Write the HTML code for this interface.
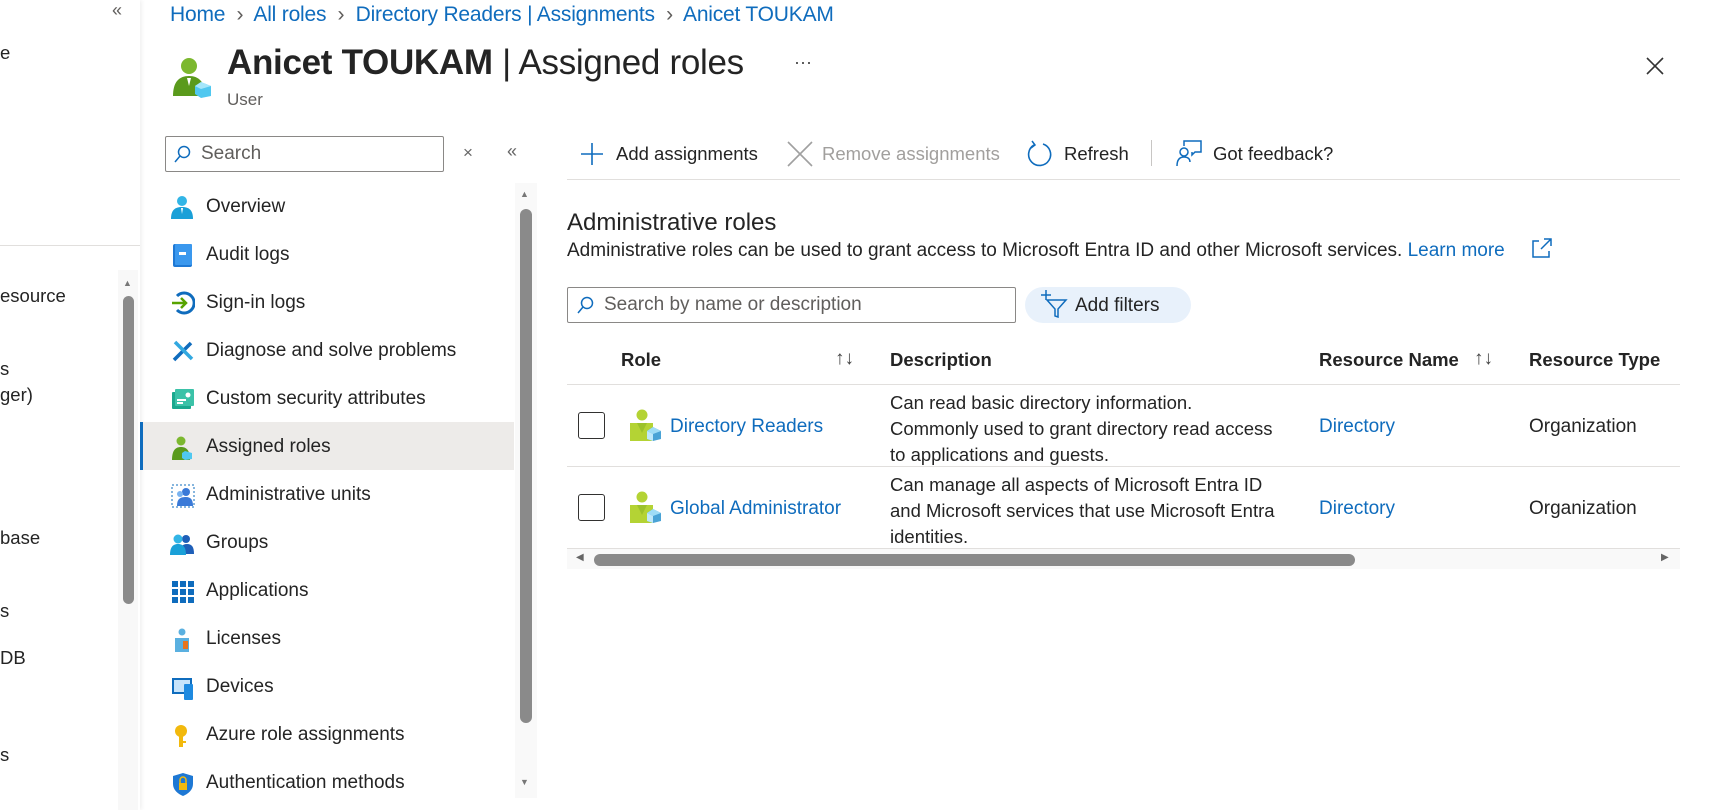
<!DOCTYPE html>
<html><head><meta charset="utf-8"><style>
*{margin:0;padding:0;box-sizing:border-box}
body{width:1710px;height:810px;overflow:hidden;background:#fff;font-family:"Liberation Sans",sans-serif;color:#242424;position:relative}
.a{position:absolute;white-space:nowrap}
.lk{color:#0f6cbd}
.nav{font-size:19px;line-height:20px}
.ico{position:absolute;width:24px;height:24px}
</style></head><body>
<!-- left partial panel -->
<div class="a" style="left:0;top:0;width:140px;height:810px;background:#fff;box-shadow:2px 0 4px rgba(0,0,0,.06)"></div>
<div class="a" style="left:112px;top:0;font-size:18px;color:#605e5c">«</div>
<div class="a" style="left:0;top:42px;font-size:18.5px">e</div>
<div class="a" style="left:0;top:245px;width:140px;height:1px;background:#e1dfdd"></div>
<div class="a" style="left:118px;top:270px;width:20px;height:540px;background:#f8f8f8"></div>
<div class="a" style="left:123px;top:278px;font-size:9px;color:#777">▲</div>
<div class="a" style="left:123px;top:296px;width:11px;height:308px;border-radius:6px;background:#8a8a8a"></div>
<div class="a" style="left:0;top:285px;font-size:18.5px">esource</div>
<div class="a" style="left:0;top:358px;font-size:18.5px">s</div>
<div class="a" style="left:0;top:384px;font-size:18.5px">ger)</div>
<div class="a" style="left:0;top:527px;font-size:18.5px">base</div>
<div class="a" style="left:0;top:600px;font-size:18.5px">s</div>
<div class="a" style="left:0;top:647px;font-size:18.5px">DB</div>
<div class="a" style="left:0;top:744px;font-size:18.5px">s</div>

<!-- breadcrumb -->
<div class="a lk" style="left:170px;top:3px;font-size:21px;letter-spacing:-0.2px">Home <span style="color:#605e5c">&nbsp;›&nbsp;</span> All roles <span style="color:#605e5c">&nbsp;›&nbsp;</span> Directory Readers | Assignments <span style="color:#605e5c">&nbsp;›&nbsp;</span> Anicet TOUKAM</div>

<!-- title -->
<svg class="a" style="left:171px;top:56px" width="42" height="42" viewBox="0 0 42 42"><circle cx="18" cy="10" r="8" fill="#7cb82f"/><path d="M2 40 C2 26 8 20 18 20 C28 20 34 26 34 40Z" fill="#5a9a1c"/><path d="M16 22 L18 30 L20 22Z" fill="#fff"/><path d="M30 26 L40 30 L40 40 L30 42 L24 38 L24 30Z" fill="#50c8f0"/><path d="M24 30 L30 33 L40 30 L30 26Z" fill="#a5e6fa"/></svg>
<div class="a" style="left:227px;top:43px;font-size:35px;letter-spacing:-0.3px"><b style="font-weight:600">Anicet TOUKAM</b> | Assigned roles</div>
<div class="a" style="left:794px;top:52px;font-size:18px;color:#444">···</div>
<div class="a" style="left:227px;top:90px;font-size:17px;color:#605e5c">User</div>
<svg class="a" style="left:1645px;top:56px" width="20" height="20"><path d="M2 2L18 18M18 2L2 18" stroke="#333" stroke-width="1.6"/></svg>

<!-- nav search -->
<div class="a" style="left:165px;top:136px;width:279px;height:36px;border:1px solid #8a8886;border-radius:2px"></div>
<svg class="a" style="left:173px;top:145px" width="18" height="18"><circle cx="11" cy="7" r="5.5" fill="none" stroke="#0f6cbd" stroke-width="1.5"/><path d="M7 11L2 17" stroke="#0f6cbd" stroke-width="1.5"/></svg>
<div class="a" style="left:201px;top:143px;font-size:19px;color:#605e5c">Search</div>
<div class="a" style="left:463px;top:143px;font-size:17px;color:#666">×</div>
<div class="a" style="left:507px;top:141px;font-size:18px;color:#666">«</div>

<!-- nav scroll -->
<div class="a" style="left:515px;top:183px;width:22px;height:615px;background:#f9f9f9"></div>
<div class="a" style="left:520px;top:189px;font-size:9px;color:#777">▲</div>
<div class="a" style="left:520px;top:209px;width:12px;height:514px;border-radius:6px;background:#8a8a8a"></div>
<div class="a" style="left:520px;top:777px;font-size:9px;color:#777">▼</div>

<!-- selected -->
<div class="a" style="left:140px;top:422px;width:374px;height:48px;background:#edebe9"></div>
<div class="a" style="left:140px;top:422px;width:3px;height:48px;background:#0f6cbd"></div>

<div class="nav">
<svg class="ico" style="left:170px;top:195px" viewBox="0 0 24 24"><circle cx="12" cy="6" r="5" fill="#32b5e6"/><path d="M1 24C1 15 5 12 12 12C19 12 23 15 23 24Z" fill="#1aa0d8"/><path d="M11 13L12 19L13 13Z" fill="#fff"/></svg>
<div class="a" style="left:206px;top:197px">Overview</div>
<svg class="ico" style="left:171px;top:243px" viewBox="0 0 24 24"><rect x="2" y="1" width="19" height="23" rx="2" fill="#1e78d4"/><rect x="4" y="1" width="17" height="21" rx="1" fill="#3a98ee"/><rect x="8" y="9" width="7" height="3" fill="#fff"/></svg>
<div class="a" style="left:206px;top:245px">Audit logs</div>
<svg class="ico" style="left:171px;top:291px" viewBox="0 0 24 24"><path d="M6 5A10 10 0 1 1 6 19" fill="none" stroke="#0f6cbd" stroke-width="3"/><path d="M1 12H15M10 7L15 12L10 17" fill="none" stroke="#57a300" stroke-width="2.5"/></svg>
<div class="a" style="left:206px;top:293px">Sign-in logs</div>
<svg class="ico" style="left:171px;top:339px" viewBox="0 0 24 24"><path d="M3 21L20 4" stroke="#0f6cbd" stroke-width="3.5"/><path d="M4 3L21 20" stroke="#32a8e0" stroke-width="3.5"/></svg>
<div class="a" style="left:206px;top:341px">Diagnose and solve problems</div>
<svg class="ico" style="left:171px;top:387px" viewBox="0 0 24 24"><rect x="1" y="5" width="19" height="17" rx="1" fill="#1aa88e"/><rect x="4" y="2" width="19" height="17" rx="1" fill="#3bc2a8"/><rect x="6" y="12" width="9" height="2" fill="#fff"/><rect x="6" y="15" width="6" height="2" fill="#fff"/><circle cx="17" cy="8" r="2.5" fill="#fff"/></svg>
<div class="a" style="left:206px;top:389px">Custom security attributes</div>
<svg class="ico" style="left:170px;top:436px" viewBox="0 0 24 24"><circle cx="11" cy="5" r="4.5" fill="#7cb82f"/><path d="M2 24C2 15 5 11 11 11C17 11 20 15 20 24Z" fill="#5a9a1c"/><path d="M15 15L22 17V23L15 24L12 22V17Z" fill="#50c8f0"/></svg>
<div class="a" style="left:206px;top:437px">Assigned roles</div>
<svg class="ico" style="left:171px;top:484px" viewBox="0 0 24 24"><rect x="1" y="1" width="22" height="22" fill="none" stroke="#0f6cbd" stroke-dasharray="2 2"/><circle cx="15" cy="8" r="4" fill="#3a7ad8"/><path d="M6 22C6 15 9 13 15 13C20 13 22 16 22 22Z" fill="#3a7ad8"/><circle cx="9" cy="10" r="3" fill="#7ab3f0"/></svg>
<div class="a" style="left:206px;top:485px">Administrative units</div>
<svg class="ico" style="left:170px;top:532px" viewBox="0 0 24 24"><circle cx="16" cy="7" r="4" fill="#1e5fb8"/><path d="M10 22C10 15 12 12 17 12C22 12 24 15 24 22Z" fill="#1e5fb8"/><circle cx="8" cy="7" r="4.5" fill="#32b5e6"/><path d="M0 23C0 15 3 12 8 12C13 12 16 15 16 23Z" fill="#1aa0d8"/></svg>
<div class="a" style="left:206px;top:533px">Groups</div>
<svg class="ico" style="left:171px;top:580px" viewBox="0 0 24 24"><g fill="#0f6cbd"><rect x="1" y="1" width="6" height="6"/><rect x="9" y="1" width="6" height="6"/><rect x="17" y="1" width="6" height="6"/><rect x="1" y="9" width="6" height="6"/><rect x="9" y="9" width="6" height="6"/><rect x="17" y="9" width="6" height="6"/><rect x="1" y="17" width="6" height="6"/><rect x="9" y="17" width="6" height="6"/><rect x="17" y="17" width="6" height="6"/></g></svg>
<div class="a" style="left:206px;top:581px">Applications</div>
<svg class="ico" style="left:171px;top:628px" viewBox="0 0 24 24"><circle cx="11" cy="4" r="3.5" fill="#5ab0e0"/><path d="M4 24V10H18V24Z" fill="#5ab0e0"/><rect x="12" y="13" width="5" height="8" fill="#e8741c"/></svg>
<div class="a" style="left:206px;top:629px">Licenses</div>
<svg class="ico" style="left:171px;top:676px" viewBox="0 0 24 24"><rect x="1" y="2" width="20" height="16" fill="#0f6cbd"/><rect x="3" y="4" width="16" height="12" fill="#c7e4fb"/><rect x="13" y="8" width="9" height="16" rx="1" fill="#1e8ae0"/></svg>
<div class="a" style="left:206px;top:677px">Devices</div>
<svg class="ico" style="left:171px;top:724px" viewBox="0 0 24 24"><circle cx="10" cy="7" r="6" fill="#f2b90d"/><rect x="8" y="11" width="4" height="12" fill="#f2b90d"/><rect x="12" y="17" width="3" height="2" fill="#f2b90d"/></svg>
<div class="a" style="left:206px;top:725px">Azure role assignments</div>
<svg class="ico" style="left:171px;top:772px" viewBox="0 0 24 24"><path d="M12 1L22 4V12C22 18 17 22 12 24C7 22 2 18 2 12V4Z" fill="#1e78d4"/><rect x="8" y="11" width="8" height="7" fill="#f2b90d"/><path d="M9 11V8A3 3 0 0 1 15 8V11" fill="none" stroke="#f2b90d" stroke-width="1.5"/></svg>
<div class="a" style="left:206px;top:773px">Authentication methods</div>
</div>

<!-- toolbar -->
<svg class="a" style="left:581px;top:143px" width="22" height="22"><path d="M11 0V22M0 11H22" stroke="#0f6cbd" stroke-width="1.6"/></svg>
<div class="a" style="left:616px;top:143px;font-size:18.5px">Add assignments</div>
<svg class="a" style="left:787px;top:141px" width="26" height="26"><path d="M1 1L25 25M25 1L1 25" stroke="#a0a0a0" stroke-width="1.6"/></svg>
<div class="a" style="left:822px;top:143px;font-size:18.5px;color:#a19f9d">Remove assignments</div>
<svg class="a" style="left:1027px;top:140px" width="25" height="28"><path d="M7 5A11 11 0 1 0 16 4" fill="none" stroke="#0f6cbd" stroke-width="1.6"/><path d="M5 1L8 5L4 8" fill="none" stroke="#0f6cbd" stroke-width="1.5"/></svg>
<div class="a" style="left:1064px;top:143px;font-size:18.5px">Refresh</div>
<div class="a" style="left:1151px;top:140px;width:1px;height:26px;background:#c8c6c4"></div>
<svg class="a" style="left:1176px;top:140px" width="26" height="27"><circle cx="8" cy="12" r="4" fill="none" stroke="#0f6cbd" stroke-width="1.5"/><path d="M1 26C1 19 4 17 8 17C12 17 14 19 14 22" fill="none" stroke="#0f6cbd" stroke-width="1.5"/><path d="M8 6V1H25V12H19L16 15V12" fill="none" stroke="#0f6cbd" stroke-width="1.5"/></svg>
<div class="a" style="left:1213px;top:143px;font-size:18.5px">Got feedback?</div>
<div class="a" style="left:567px;top:179px;width:1113px;height:1px;background:#e1dfdd"></div>

<!-- content -->
<div class="a" style="left:567px;top:209px;font-size:24px">Administrative roles</div>
<div class="a" style="left:567px;top:240px;font-size:19px">Administrative roles can be used to grant access to Microsoft Entra ID and other Microsoft services. <span class="lk">Learn more</span></div>
<svg class="a" style="left:1531px;top:238px" width="21" height="21"><path d="M8 3H2V19H18V13" fill="none" stroke="#0f6cbd" stroke-width="1.5"/><path d="M10 11L20 1M13 1H20V8" fill="none" stroke="#0f6cbd" stroke-width="1.5"/></svg>

<div class="a" style="left:567px;top:287px;width:449px;height:36px;border:1px solid #8a8886;border-radius:2px"></div>
<svg class="a" style="left:576px;top:296px" width="18" height="18"><circle cx="11" cy="7" r="5.5" fill="none" stroke="#0f6cbd" stroke-width="1.5"/><path d="M7 11L2 17" stroke="#0f6cbd" stroke-width="1.5"/></svg>
<div class="a" style="left:604px;top:294px;font-size:19px;color:#605e5c">Search by name or description</div>
<div class="a" style="left:1025px;top:287px;width:166px;height:36px;border-radius:18px;background:#e8f1fb"></div>
<svg class="a" style="left:1040px;top:290px" width="28" height="28"><path d="M1 5H11M6 0V10" stroke="#0f6cbd" stroke-width="1.5"/><path d="M7 10H26L18 19V27L15 26V19Z" fill="none" stroke="#0f6cbd" stroke-width="1.5"/></svg>
<div class="a" style="left:1075px;top:295px;font-size:19px">Add filters</div>

<!-- table header -->
<div class="a" style="left:621px;top:349px;font-size:18.5px;font-weight:600">Role</div>
<div class="a" style="left:835px;top:348px;font-size:19px;color:#444">↑↓</div>
<div class="a" style="left:890px;top:349px;font-size:18.5px;font-weight:600">Description</div>
<div class="a" style="left:1319px;top:349px;font-size:18.5px;font-weight:600">Resource Name</div>
<div class="a" style="left:1474px;top:348px;font-size:19px;color:#444">↑↓</div>
<div class="a" style="left:1529px;top:349px;font-size:18.5px;font-weight:600">Resource Type</div>
<div class="a" style="left:567px;top:384px;width:1113px;height:1px;background:#e1dfdd"></div>

<!-- row 1 -->
<div class="a" style="left:578px;top:412px;width:27px;height:27px;border:1px solid #323130;border-radius:3px"></div>
<svg class="a" style="left:629px;top:409px" width="32" height="32" viewBox="0 0 32 32"><circle cx="13" cy="6" r="5.5" fill="#b4d334"/><path d="M1 32V14H24V32Z" fill="#b4d334"/><path d="M8 14H18L13 24Z" fill="#9cc22a"/><path d="M24 18L32 22V30L24 32L18 30V22Z" fill="#4aa3d6"/><path d="M18 22L24 25L32 22L24 18Z" fill="#9fdcf6"/><path d="M18 22L24 25V32L18 30Z" fill="#bfe8fa"/></svg>
<div class="a lk" style="left:670px;top:416px;font-size:19px">Directory Readers</div>
<div class="a" style="left:890px;top:390px;font-size:18.5px;line-height:26px">Can read basic directory information.<br>Commonly used to grant directory read access<br>to applications and guests.</div>
<div class="a lk" style="left:1319px;top:416px;font-size:19px">Directory</div>
<div class="a" style="left:1529px;top:416px;font-size:19px">Organization</div>
<div class="a" style="left:567px;top:466px;width:1113px;height:1px;background:#e1dfdd"></div>

<!-- row 2 -->
<div class="a" style="left:578px;top:494px;width:27px;height:27px;border:1px solid #323130;border-radius:3px"></div>
<svg class="a" style="left:629px;top:491px" width="32" height="32" viewBox="0 0 32 32"><circle cx="13" cy="6" r="5.5" fill="#b4d334"/><path d="M1 32V14H24V32Z" fill="#b4d334"/><path d="M8 14H18L13 24Z" fill="#9cc22a"/><path d="M24 18L32 22V30L24 32L18 30V22Z" fill="#4aa3d6"/><path d="M18 22L24 25L32 22L24 18Z" fill="#9fdcf6"/><path d="M18 22L24 25V32L18 30Z" fill="#bfe8fa"/></svg>
<div class="a lk" style="left:670px;top:498px;font-size:19px">Global Administrator</div>
<div class="a" style="left:890px;top:472px;font-size:18.5px;line-height:26px">Can manage all aspects of Microsoft Entra ID<br>and Microsoft services that use Microsoft Entra<br>identities.</div>
<div class="a lk" style="left:1319px;top:498px;font-size:19px">Directory</div>
<div class="a" style="left:1529px;top:498px;font-size:19px">Organization</div>
<div class="a" style="left:567px;top:548px;width:1113px;height:1px;background:#e1dfdd"></div>

<!-- h scrollbar -->
<div class="a" style="left:567px;top:549px;width:1113px;height:20px;background:#f9f9f9"></div>
<div class="a" style="left:576px;top:552px;font-size:10px;color:#666">◀</div>
<div class="a" style="left:594px;top:554px;width:761px;height:12px;border-radius:6px;background:#8a8a8a"></div>
<div class="a" style="left:1661px;top:552px;font-size:10px;color:#666">▶</div>
</body></html>
